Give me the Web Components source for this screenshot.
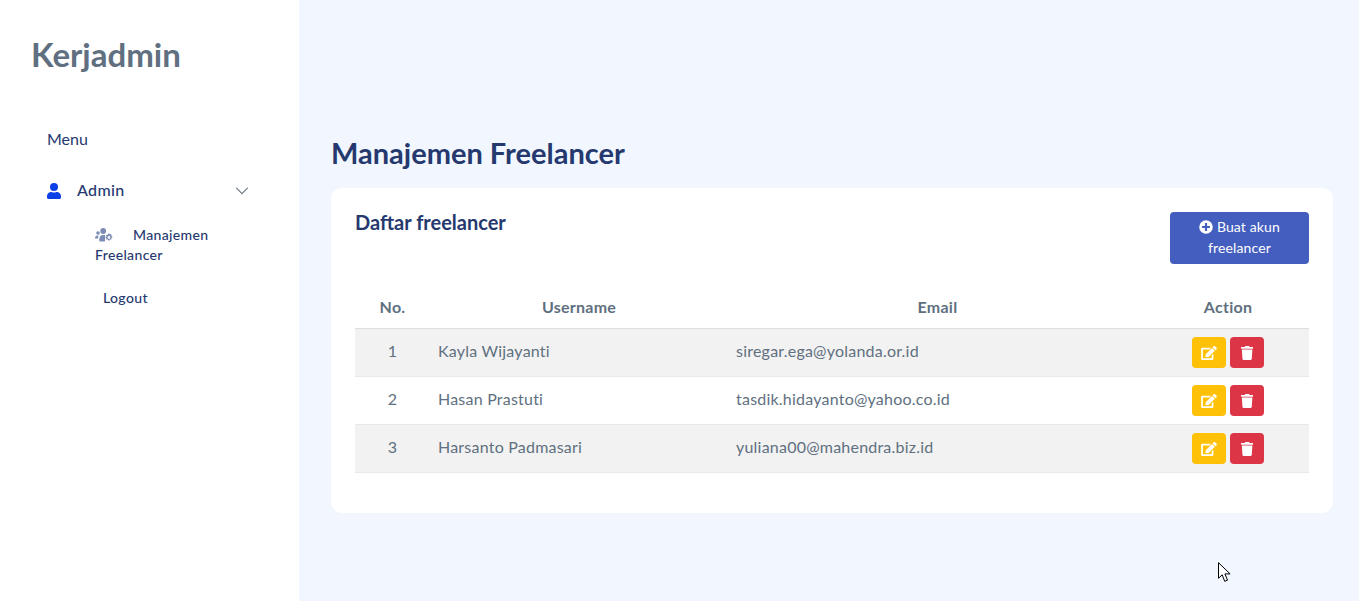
<!DOCTYPE html>
<html lang="id">
<head>
<meta charset="utf-8">
<title>Kerjadmin</title>
<style>
html, body { margin: 0; height: 100%; overflow: hidden; }
body { background: #f2f7ff; font-family: Lato, "Noto Sans", sans-serif; color: #607080; }
</style>
</head>
<body>
<app-shell>
    <app-sidebar slot="sidebar"></app-sidebar>
    <page-heading>Manajemen Freelancer</page-heading>
    <freelancer-card></freelancer-card>
</app-shell>
<mouse-pointer></mouse-pointer>

<script>
const icons = {
    user: '<svg viewBox="0 0 448 512" width="14" height="16"><path fill="currentColor" d="M224 256a128 128 0 1 0 0-256 128 128 0 0 0 0 256zm90 32h-17a174 174 0 0 1-146 0h-17C60 288 0 348 0 422v42c0 27 21 48 48 48h352c27 0 48-21 48-48v-42c0-74-60-134-134-134z"/></svg>',
    chevron: '<svg viewBox="0 0 16 16" width="14" height="14"><path fill="none" stroke="currentColor" stroke-width="1.3" stroke-linecap="round" d="M1.8 4.8 8 11l6.2-6.2"/></svg>',
    team: '<svg viewBox="0 0 18 14" width="18" height="14"><g fill="currentColor"><circle cx="8.2" cy="3" r="2.9"/><circle cx="3" cy="5" r="1.8"/><path d="M0 10c0-1.700 1-2.600 2.400-2.600h1.400C3.200 8 3 9.300 3 10.500H.7C.3 10.500 0 10.400 0 10z"/><path d="M4.300 11.200c0-2.500 1.300-4.200 3.700-4.200h2v6.500H5.300c-.6 0-1-.4-1-1z"/><path fill-rule="evenodd" d="M13.500 5.300l1 .1.300 1.200 1-.6.900.9-.6 1 1.200.4v1.300l-1.200.3.600 1-.9.900-1-.6-.3 1.200h-1.300l-.3-1.200-1 .6-.9-.9.600-1-1.200-.3V8.800l1.200-.4-.6-1 .9-.9 1 .6.300-1.200zM14 8a1.400 1.400 0 1 0 0 2.800A1.400 1.400 0 0 0 14 8z"/></g></svg>',
    plus: '<svg viewBox="0 0 512 512" width="14" height="14"><path fill="currentColor" d="M256 8a248 248 0 1 0 0 496 248 248 0 0 0 0-496zm144 276c0 7-5 12-12 12h-92v92c0 7-5 12-12 12h-56c-7 0-12-5-12-12v-92h-92c-7 0-12-5-12-12v-56c0-7 5-12 12-12h92v-92c0-7 5-12 12-12h56c7 0 12 5 12 12v92h92c7 0 12 5 12 12z"/></svg>',
    edit: '<svg viewBox="0 0 576 512" width="16" height="14"><path fill="currentColor" d="M402.600 83.200l90.200 90.200c3.800 3.800 3.800 10 0 13.800L274.400 405.600l-92.800 10.300c-12.400 1.400-22.900-9.100-21.500-21.500l10.300-92.800L388.800 83.200c3.800-3.800 10-3.800 13.800 0zm162-22.900l-48.800-48.800c-15.200-15.200-39.900-15.200-55.200 0l-35.400 35.400c-3.800 3.800-3.800 10 0 13.800l90.200 90.200c3.800 3.800 10 3.800 13.800 0l35.400-35.400c15.200-15.300 15.200-40 0-55.200zM384 346.200V448H64V128h229.800c3.200 0 6.200-1.300 8.500-3.500l40-40c7.600-7.600 2.200-20.500-8.500-20.500H48C21.500 64 0 85.500 0 112v352c0 26.500 21.500 48 48 48h352c26.500 0 48-21.500 48-48V306.200c0-10.700-12.900-16-20.500-8.500l-40 40c-2.200 2.300-3.500 5.300-3.500 8.500z"/></svg>',
    trash: '<svg viewBox="0 0 448 512" width="12.250" height="14"><path fill="currentColor" d="M432 32H312l-9-19A24 24 0 0 0 281 0H167a24 24 0 0 0-22 13l-9 19H16C7 32 0 39 0 48v32c0 9 7 16 16 16h416c9 0 16-7 16-16V48c0-9-7-16-16-16zM53 467c2 25 23 45 48 45h246c25 0 46-20 48-45l21-339H32z"/></svg>'
};

customElements.define('app-shell', class extends HTMLElement {
    constructor() {
        super();
        this.attachShadow({mode: 'open'});
        this.shadowRoot.innerHTML = `<style>
            :host { display: flex; height: 601px; }
            main { flex: 1; min-width: 0; padding: 136px 26px 0 32px; }
        </style>
        <slot name="sidebar"></slot>
        <main><slot></slot></main>`;
    }
});

customElements.define('app-sidebar', class extends HTMLElement {
    constructor() {
        super();
        this.attachShadow({mode: 'open'});
        this.shadowRoot.innerHTML = `<style>
            :host { display: block; box-sizing: border-box; width: 299px; flex: none; background: #fff; padding: 31px 0 0 31px; }
            h1 { margin: 0; font-size: 33px; line-height: 46px; font-weight: 700; color: #607080; }
            nav { margin-top: 50px; padding-left: 16px; color: #25396f; }
            .title { font-size: 16px; line-height: 24px; height: 24px; }
            .admin { display: flex; align-items: center; height: 24px; margin-top: 28px; font-size: 16px; letter-spacing: .35px; font-weight: 500; }
            .admin .label { margin-bottom: 3px; }
            .admin .person { color: #0d3fe8; display: flex; margin-right: 16px; }
            .admin .chev { color: #6d7780; display: flex; margin-left: auto; margin-right: 50px; }
            .sub { font-size: 14px; font-weight: 500; letter-spacing: .35px; }
            .manage { width: 136px; margin: 22px 0 0 48px; line-height: 20px; }
            .manage svg { color: #7c8db5; vertical-align: -2px; margin-right: 20px; }
            .logout { margin: 23px 0 0 56px; line-height: 20px; }
        </style>
        <h1>Kerjadmin</h1>
        <nav>
            <div class="title">Menu</div>
            <div class="admin">
                <span class="person">${icons.user}</span>
                <span class="label">Admin</span>
                <span class="chev">${icons.chevron}</span>
            </div>
            <div class="sub manage">${icons.team}Manajemen Freelancer</div>
            <div class="sub logout">Logout</div>
        </nav>`;
    }
});

customElements.define('page-heading', class extends HTMLElement {
    constructor() {
        super();
        this.attachShadow({mode: 'open'});
        this.shadowRoot.innerHTML = `<style>
            :host { display: block; font-size: 29px; line-height: 34px; font-weight: 700; color: #25396f; margin-bottom: 18px; }
        </style><slot></slot>`;
    }
});

customElements.define('freelancer-row', class extends HTMLElement {
    constructor() {
        super();
        this.attachShadow({mode: 'open'});
        const striped = this.hasAttribute('striped');
        this.shadowRoot.innerHTML = `<style>
            :host { display: grid; grid-template-columns: 75px 298px 419px 162px; align-items: center; height: 47px;
                border-bottom: 1px solid #e9e9e9; background: ${striped ? '#f2f2f2' : '#fff'}; font-size: 16px; letter-spacing: .22px; }
            .no, .cell { margin-bottom: 4px; }
            .no { text-align: center; }
            .cell { padding-left: 8px; }
            .actions { display: flex; justify-content: center; gap: 4px; }
            .btn { box-sizing: border-box; width: 34px; height: 31px; border-radius: 4px; color: #fff; display: flex; align-items: center; justify-content: center; }
            .warn { background: #ffc107; }
            .danger { background: #dc3545; }
        </style>
        <div class="no">${this.getAttribute('no')}</div>
        <div class="cell">${this.getAttribute('name')}</div>
        <div class="cell">${this.getAttribute('email')}</div>
        <div class="actions">
            <span class="btn warn">${icons.edit}</span>
            <span class="btn danger">${icons.trash}</span>
        </div>`;
    }
});

customElements.define('freelancer-card', class extends HTMLElement {
    constructor() {
        super();
        this.attachShadow({mode: 'open'});
        this.shadowRoot.innerHTML = `<style>
            :host { display: block; background: #fff; border-radius: 11px; padding: 24px 24px 40px; }
            .top { display: flex; justify-content: space-between; align-items: flex-start; }
            h4 { margin: 0; font-size: 20px; line-height: 20px; font-weight: 700; color: #25396f; }
            .create { box-sizing: border-box; width: 139px; height: 52px; background: #435ebe; color: #fff; border-radius: 4px;
                text-align: center; font-size: 14px; letter-spacing: .12px; line-height: 21px; padding: 4px 12px; }
            .create svg { vertical-align: -2px; }
            .head { display: grid; grid-template-columns: 75px 298px 419px 162px; align-items: center; height: 40px; margin-top: 24px;
                border-bottom: 1px solid #dedede; font-weight: 700; font-size: 16px; letter-spacing: .25px; text-align: center; }
            .head div { margin-bottom: 4px; }
        </style>
        <div class="top">
            <h4>Daftar freelancer</h4>
            <div class="create">${icons.plus} Buat akun freelancer</div>
        </div>
        <div class="head"><div>No.</div><div>Username</div><div>Email</div><div>Action</div></div>
        <freelancer-row striped no="1" name="Kayla Wijayanti" email="siregar.ega@yolanda.or.id"></freelancer-row>
        <freelancer-row no="2" name="Hasan Prastuti" email="tasdik.hidayanto@yahoo.co.id"></freelancer-row>
        <freelancer-row striped no="3" name="Harsanto Padmasari" email="yuliana00@mahendra.biz.id"></freelancer-row>`;
    }
});

customElements.define('mouse-pointer', class extends HTMLElement {
    constructor() {
        super();
        this.attachShadow({mode: 'open'});
        this.shadowRoot.innerHTML = `<style>
            :host { position: absolute; left: 1218px; top: 562px; display: block; width: 14px; height: 21px; }
        </style>
        <svg width="14" height="21" viewBox="0 0 14 21"><path d="M.5.7v15.600l3.700-3.500 2.500 6.500 2.800-1.100-2.600-6.300h5.200z" fill="#fff" stroke="#000" stroke-width="1"/></svg>`;
    }
});
</script>
</body>
</html>
